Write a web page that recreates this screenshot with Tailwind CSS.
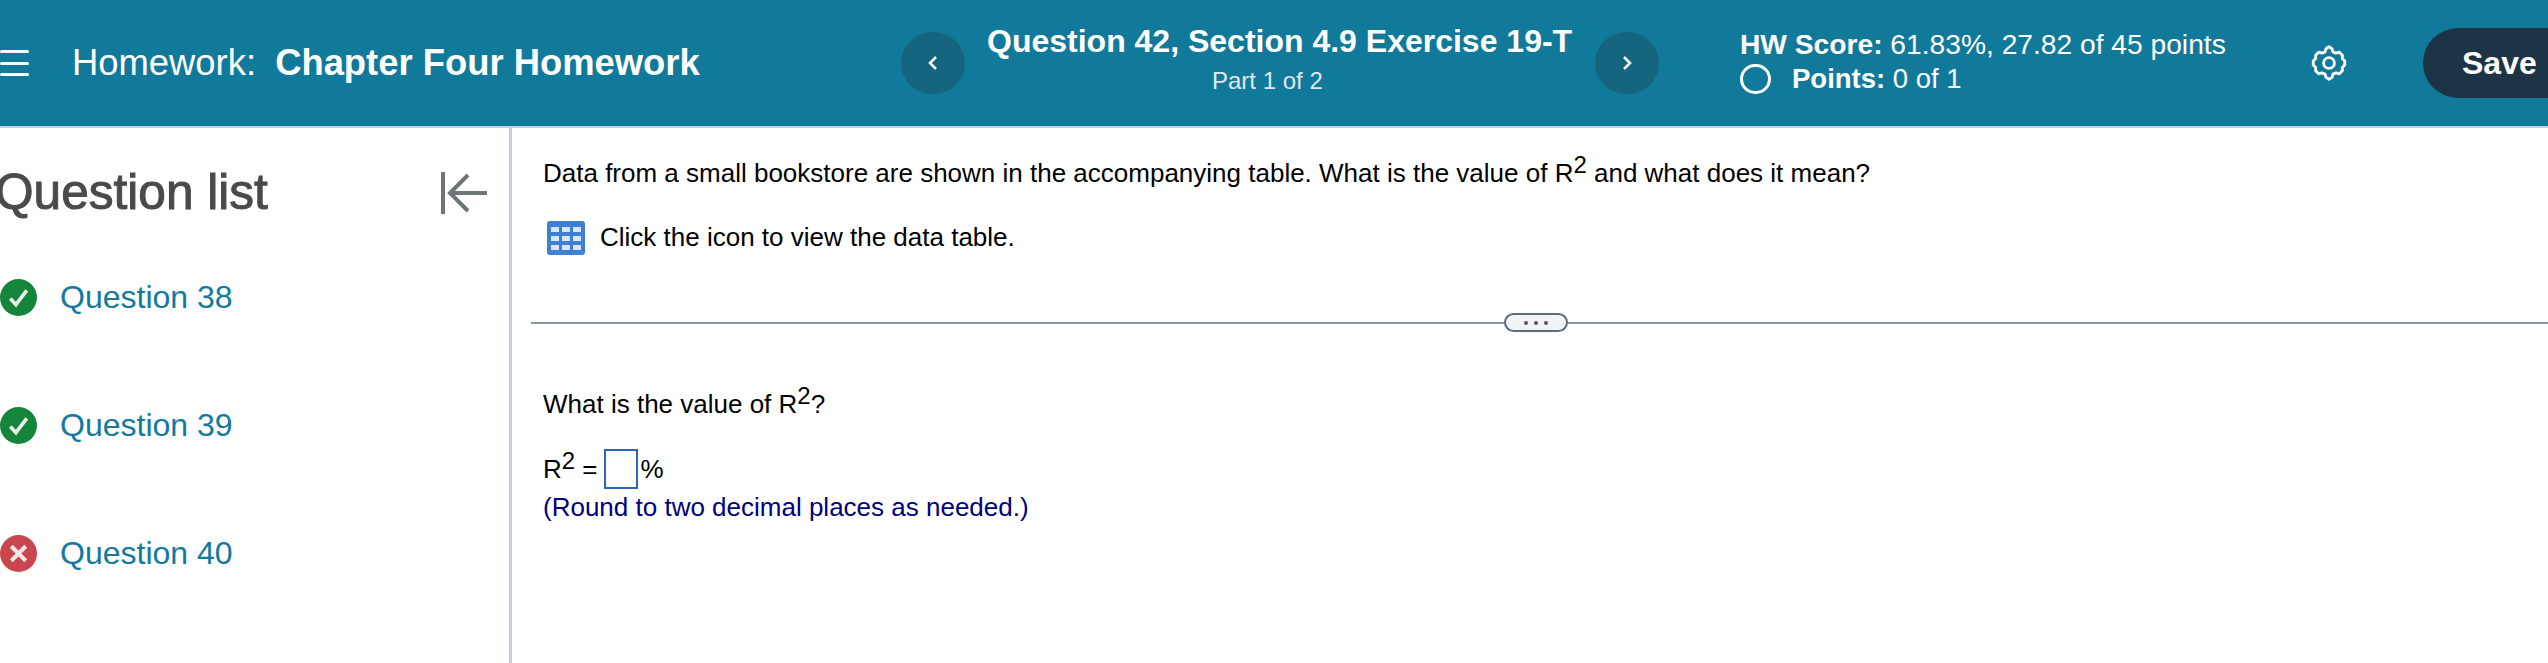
<!DOCTYPE html>
<html lang="en">

<head>
    <meta charset="UTF-8">
    <title>Homework</title>
    <script src="https://cdn.jsdelivr.net/npm/@tailwindcss/browser@4"></script>
</head>

<body class="w-[2548px] h-[663px] overflow-hidden bg-white font-['Liberation_Sans',Arial,sans-serif]">

    <!-- Header -->
    <header class="flex items-center h-[128px] bg-[#117a9b] border-b-2 border-[#c5ccdb] text-white">
        <div class="flex items-center w-[901px]">
            <div class="flex flex-col justify-between w-[29px] h-[26px]">
                <span class="h-[3px] bg-white rounded"></span>
                <span class="h-[3px] bg-white rounded"></span>
                <span class="h-[3px] bg-white rounded"></span>
            </div>
            <p class="ml-[43px] text-[36.4px] leading-none whitespace-nowrap">Homework: <b class="ml-[9px]">Chapter Four Homework</b></p>
        </div>
        <button class="flex items-center justify-center w-[64px] h-[62px] rounded-full bg-[#15657f]">
            <svg width="12" height="18" viewBox="0 0 12 18" fill="none" stroke="white" stroke-width="2.5"><path d="M9 3 L3 9 L9 15" /></svg>
        </button>
        <div class="flex flex-col w-[630px] pl-[22px] pb-[10px]">
            <p class="text-[32px] leading-[38px] font-bold whitespace-nowrap">Question 42, Section 4.9 Exercise 19-T</p>
            <p class="ml-[225px] mt-[7px] text-[24px] leading-[28px] text-[#e1e8ef] whitespace-nowrap">Part 1 of 2</p>
        </div>
        <button class="flex items-center justify-center w-[64px] h-[62px] rounded-full bg-[#15657f]">
            <svg width="12" height="18" viewBox="0 0 12 18" fill="none" stroke="white" stroke-width="2.5"><path d="M3 3 L9 9 L3 15" /></svg>
        </button>
        <div class="flex flex-col w-[652px] pl-[81px] pb-[4px]">
            <p class="text-[28.2px] leading-[36px] whitespace-nowrap"><b>HW Score:</b> 61.83%, 27.82 of 45 points</p>
            <div class="flex items-center">
                <span class="w-[31px] h-[30px] rounded-full border-[3px] border-white"></span>
                <p class="ml-[21px] text-[27.5px] leading-[34px] whitespace-nowrap"><b>Points:</b> 0 of 1</p>
            </div>
        </div>
        <svg width="36" height="36" viewBox="0 0 24 24" fill="none" stroke="white" stroke-width="1.9" stroke-linejoin="round">
            <path d="M12 1.2 L14 2.4 L14.6 4.6 L16.7 5.4 L18.9 4.8 L20.9 6.9 L20.9 9 L22.5 10.6 L22.5 13.4 L20.9 15 L20.9 17.1 L18.9 19.2 L16.7 18.6 L14.6 19.4 L14 21.6 L12 22.8 L10 21.6 L9.4 19.4 L7.3 18.6 L5.1 19.2 L3.1 17.1 L3.1 15 L1.5 13.4 L1.5 10.6 L3.1 9 L3.1 6.9 L5.1 4.8 L7.3 5.4 L9.4 4.6 L10 2.4 Z" />
            <circle cx="12" cy="12" r="3.6" />
        </svg>
        <button class="flex-1 ml-[76px] h-[70px] pl-[39px] text-left rounded-l-full bg-[#1d3446] text-[32px] font-bold">Save</button>
    </header>

    <div class="flex h-[535px]">
        <!-- Question list sidebar -->
        <aside class="w-[512px] shrink-0 border-r-[3px] border-[#c5ccdb] overflow-hidden">
            <div class="flex items-center justify-between h-[84px] mt-[23px]">
                <h2 class="ml-[-5px] text-[49.6px] leading-none text-[#4a4a4a] [-webkit-text-stroke:1px_#4a4a4a] whitespace-nowrap">Question list</h2>
                <svg class="mr-[22px]" width="46" height="42" viewBox="0 0 46 42" fill="none" stroke="#6d7577" stroke-width="4">
                    <path d="M2 0 V42" />
                    <path d="M46 21 H10" />
                    <path d="M27 3 L9 21 L27 39" />
                </svg>
            </div>
            <ul class="mt-[44px] flex flex-col gap-[92px]">
                <li class="flex items-center h-[36px]">
                    <svg width="37" height="37" viewBox="0 0 36 36"><circle cx="18" cy="18" r="18" fill="#15853c" /><path d="M10 19 L15.5 25 L26 11" fill="none" stroke="#e8f3ec" stroke-width="3.5" /></svg>
                    <span class="ml-[23px] text-[32px] text-[#127a9e]">Question 38</span>
                </li>
                <li class="flex items-center h-[36px]">
                    <svg width="37" height="37" viewBox="0 0 36 36"><circle cx="18" cy="18" r="18" fill="#15853c" /><path d="M10 19 L15.5 25 L26 11" fill="none" stroke="#e8f3ec" stroke-width="3.5" /></svg>
                    <span class="ml-[23px] text-[32px] text-[#127a9e]">Question 39</span>
                </li>
                <li class="flex items-center h-[36px]">
                    <svg width="37" height="37" viewBox="0 0 36 36"><circle cx="18" cy="18" r="18" fill="#c9464e" /><path d="M11 11 L25 25 M25 11 L11 25" fill="none" stroke="#f6e6e7" stroke-width="4" /></svg>
                    <span class="ml-[23px] text-[32px] text-[#127a9e]">Question 40</span>
                </li>
            </ul>
        </aside>

        <!-- Question -->
        <main class="flex-1 pt-[27px] text-[26px] text-black">
            <p class="ml-[31px] leading-[36px] whitespace-nowrap">Data from a small bookstore are shown in the accompanying table. What is the value of R<sup class="text-[24px] top-[-9px]">2</sup> and what does it mean?</p>

            <div class="flex items-center ml-[35px] mt-[27px]">
                <svg width="38" height="34" viewBox="0 0 38 34">
                    <rect width="38" height="34" rx="3" fill="#3f80d4" />
                    <g fill="#d8e6f7">
                        <rect x="4" y="6" width="8" height="5" /><rect x="15" y="6" width="8" height="5" /><rect x="26" y="6" width="8" height="5" />
                        <rect x="4" y="15" width="8" height="5" /><rect x="15" y="15" width="8" height="5" /><rect x="26" y="15" width="8" height="5" />
                        <rect x="4" y="24" width="8" height="5" /><rect x="15" y="24" width="8" height="5" /><rect x="26" y="24" width="8" height="5" />
                    </g>
                </svg>
                <span class="ml-[15px]">Click the icon to view the data table.</span>
            </div>

            <!-- divider with the ... pill -->
            <div class="relative ml-[19px] mt-[65px] h-[2px] bg-[#8b93a8]">
                <div class="absolute left-[973px] top-[-9px] flex items-center justify-center gap-[6px] w-[64px] h-[19px] rounded-full bg-[#f1f3f7] border-2 border-[#5f6b7d]">
                    <span class="w-[4px] h-[4px] rounded-full bg-[#555]"></span>
                    <span class="w-[4px] h-[4px] rounded-full bg-[#555]"></span>
                    <span class="w-[4px] h-[4px] rounded-full bg-[#555]"></span>
                </div>
            </div>

            <p class="ml-[31px] mt-[62px] leading-[36px]">What is the value of R<sup class="text-[24px] top-[-9px]">2</sup>?</p>

            <div class="flex items-center ml-[31px] mt-[27px] h-[40px]">
                <span>R<sup class="text-[24px] top-[-9px]">2</sup> =</span>
                <span class="ml-[6px] w-[34px] h-[40px] border-2 border-[#2f63c0]"></span>
                <span class="ml-[3px]">%</span>
            </div>
            <p class="ml-[31px] mt-[2px] leading-[32px] text-[#000080]">(Round to two decimal places as needed.)</p>
        </main>
    </div>

</body>

</html>
